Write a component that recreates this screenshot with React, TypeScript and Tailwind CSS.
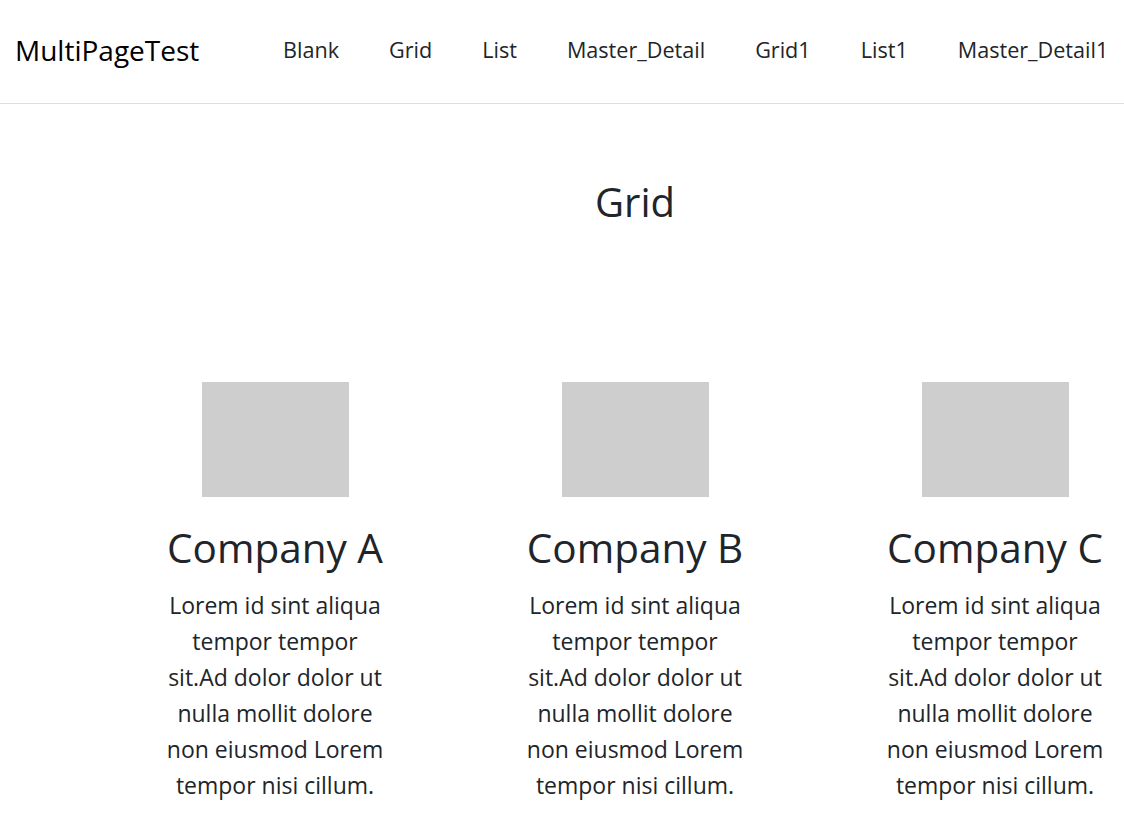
const navItems = ["Blank", "Grid", "List", "Master_Detail", "Grid1", "List1", "Master_Detail1"];

const companies = ["Company A", "Company B", "Company C"];

const loremLines = [
  "Lorem id sint aliqua",
  "tempor tempor",
  "sit.Ad dolor dolor ut",
  "nulla mollit dolore",
  "non eiusmod Lorem",
  "tempor nisi cillum.",
];

const App = () => {
  return (
    <div
      className="min-h-screen w-full overflow-hidden bg-white text-[#212529]"
      style={{ fontFamily: '"Open Sans", "Noto Sans", sans-serif' }}
    >
      {/* Navbar */}
      <header className="flex h-[104px] items-center border-b border-[#dfdfdf] pb-[3px]">
        <a className="w-[258px] shrink-0 pl-[15px] text-[28px] text-black">MultiPageTest</a>
        <nav className="flex items-center whitespace-nowrap">
          {navItems.map((item) => (
            <a key={item} className="px-[25px] text-[21.6px] text-[#212529]">
              {item}
            </a>
          ))}
        </nav>
      </header>

      {/* Page */}
      <main className="ml-[95px] w-[1080px]">
        <h1 className="pt-[74px] text-center text-[40px] leading-[1.2]">Grid</h1>

        <div className="mt-[156px] grid grid-cols-3">
          {companies.map((name) => (
            <div key={name} className="flex flex-col items-center">
              <div className="h-[115px] w-[147px] bg-[#cecece]" />
              <h2 className="mt-[27px] text-[40.5px] leading-[1.2] whitespace-nowrap">{name}</h2>
              <p className="mt-[14px] text-center text-[23px] leading-[36px]">
                {loremLines.map((line) => (
                  <span key={line} className="block whitespace-nowrap">
                    {line}
                  </span>
                ))}
              </p>
            </div>
          ))}
        </div>
      </main>
    </div>
  );
};

export default App;
